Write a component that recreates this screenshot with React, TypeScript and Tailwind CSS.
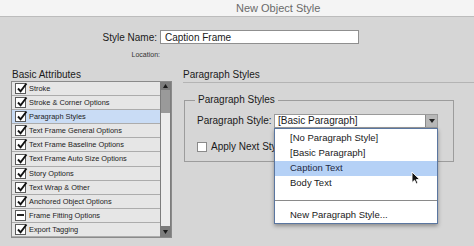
import React from 'react';

type Attr = { label: string; state: 'on' | 'mixed'; active?: boolean };

const attrs: Attr[] = [
  { label: 'Stroke', state: 'on' },
  { label: 'Stroke & Corner Options', state: 'on' },
  { label: 'Paragraph Styles', state: 'on', active: true },
  { label: 'Text Frame General Options', state: 'on' },
  { label: 'Text Frame Baseline Options', state: 'on' },
  { label: 'Text Frame Auto Size Options', state: 'on' },
  { label: 'Story Options', state: 'on' },
  { label: 'Text Wrap & Other', state: 'on' },
  { label: 'Anchored Object Options', state: 'on' },
  { label: 'Frame Fitting Options', state: 'mixed' },
  { label: 'Export Tagging', state: 'on' },
];

const menuItems = ['[No Paragraph Style]', '[Basic Paragraph]', 'Caption Text', 'Body Text'];

function Check({ state }: { state: 'on' | 'mixed' }) {
  return (
    <span className="relative w-[11px] h-[11px] bg-white border border-[#5a5a5a] flex items-center justify-center shrink-0">
      {state === 'on' ? (
        <svg className="absolute left-[0px] top-[-2px]" width="12" height="12" viewBox="0 0 12 12">
          <path d="M2 6.5 L4.6 9.3 L10.5 1.5" stroke="#111" strokeWidth="1.9" fill="none" />
        </svg>
      ) : (
        <span className="w-[7px] h-[2px] bg-[#222]" />
      )}
    </span>
  );
}

export default function App() {
  return (
    <div
      className="w-[474px] h-[246px] bg-[#d6d6d6] relative overflow-hidden text-[#1a1a1a] whitespace-nowrap"
      style={{ fontFamily: '"Liberation Sans", Arial, sans-serif' }}
    >
      {/* Title bar */}
      <div className="h-[17px] bg-[#f4f4f4] border-b border-[#bcbcbc] flex items-center pl-[236px] text-[11px] text-[#6a6a6a]">
        New Object Style
      </div>

      {/* Style name */}
      <div className="flex items-center mt-[13px] h-[14px]">
        <span className="w-[160px] text-right pr-[3px] text-[10px]">Style Name:</span>
        <div className="w-[199px] h-[14px] bg-white border border-[#8f8f8f] flex items-center px-[4px] text-[10px]">
          Caption Frame
        </div>
      </div>
      <div className="w-[160px] h-[10px] mt-[6px] text-right text-[7px] leading-[10px] text-[#333]">Location:</div>

      <div className="flex mt-[9px]">
        {/* Left column */}
        <div className="ml-[11px] w-[161px] flex flex-col">
          <div className="h-[12px] text-[10px] leading-[12px] pl-[1px]">Basic Attributes</div>
          <div className="h-[157px] border border-[#8a8a8a] flex bg-[#e4e4e4]">
            <div className="flex-1 flex flex-col">
              {attrs.map((a) => (
                <div
                  key={a.label}
                  className={`h-[14.1px] border-b border-[#acacac] flex items-center gap-[3px] pl-[3px] text-[7.4px] text-[#222] ${
                    a.active ? 'bg-[#c9dcf5]' : 'bg-[#e6e6e6]'
                  }`}
                >
                  <Check state={a.state} />
                  <span>{a.label}</span>
                </div>
              ))}
            </div>
            <div className="w-[11px] bg-[#7c7c7c] flex flex-col px-[1px]">
              <div className="h-[8px] flex items-center justify-center">
                <svg width="5" height="4" viewBox="0 0 5 4">
                  <path d="M0 4 L2.5 0 L5 4 Z" fill="#1a1a1a" />
                </svg>
              </div>
              <div className="h-[23px] bg-[#9a9a9a]" />
              <div className="flex-1 bg-[#ececec]" />
              <div className="h-[11px] flex items-center justify-center">
                <svg width="5" height="4" viewBox="0 0 5 4">
                  <path d="M0 0 L5 0 L2.5 4 Z" fill="#1a1a1a" />
                </svg>
              </div>
            </div>
          </div>
        </div>

        {/* Right column */}
        <div className="ml-[11px] flex-1 flex flex-col">
          <div className="h-[14px] text-[10px] leading-[12px] border-b border-[#b4b4b4]">Paragraph Styles</div>
          <fieldset className="mt-[11px] ml-[1px] w-[270px] border border-[#9c9c9c] pl-[12px] pb-[7px]">
            <legend className="ml-[-2px] px-[3px] text-[10px] leading-[12px]">Paragraph Styles</legend>
            <div className="flex items-center mt-[7px]">
              <span className="w-[77px] text-[10px]">Paragraph Style:</span>
              <div className="w-[164px] h-[14px] bg-white border border-[#9a9a9a] flex items-center text-[10px]">
                <span className="flex-1 pl-[3px]">[Basic Paragraph]</span>
                <span className="w-[12px] h-full bg-[#b8b8b8] border-l border-[#8a8a8a] flex items-center justify-center">
                  <svg width="6" height="4" viewBox="0 0 6 4">
                    <path d="M0 0 L6 0 L3 4 Z" fill="#222" />
                  </svg>
                </span>
              </div>
            </div>
            <div className="flex items-center gap-[4px] mt-[11px]">
              <span className="w-[10px] h-[10px] bg-white border border-[#8a8a8a]" />
              <span className="text-[10px]">Apply Next Style</span>
            </div>
          </fieldset>
        </div>
      </div>

      {/* Dropdown menu */}
      <div className="absolute left-[274px] top-[128px] w-[164px] h-[96px] bg-white border border-[#5a76a0] shadow-[0_2px_4px_rgba(0,0,0,0.35)] pt-[2px] text-[9.5px]">
        {menuItems.map((m) => (
          <div
            key={m}
            className={`h-[15px] flex items-center pl-[15px] ${m === 'Caption Text' ? 'bg-[#b5d1f6] text-[#1f2a44]' : ''}`}
          >
            {m}
          </div>
        ))}
        <div className="h-[1px] bg-[#8a8a8a] mt-[9px]" />
        <div className="h-[15px] flex items-center pl-[15px] mt-[7px]">New Paragraph Style...</div>
      </div>

      {/* Mouse cursor */}
      <svg className="absolute left-[411px] top-[171px]" width="10" height="14" viewBox="0 0 10 14">
        <path d="M1 1 L1 11.5 L3.6 9.2 L5.4 13 L7 12.3 L5.3 8.6 L8.8 8.6 Z" fill="#111" stroke="#fff" strokeWidth="0.9" />
      </svg>
    </div>
  );
}
